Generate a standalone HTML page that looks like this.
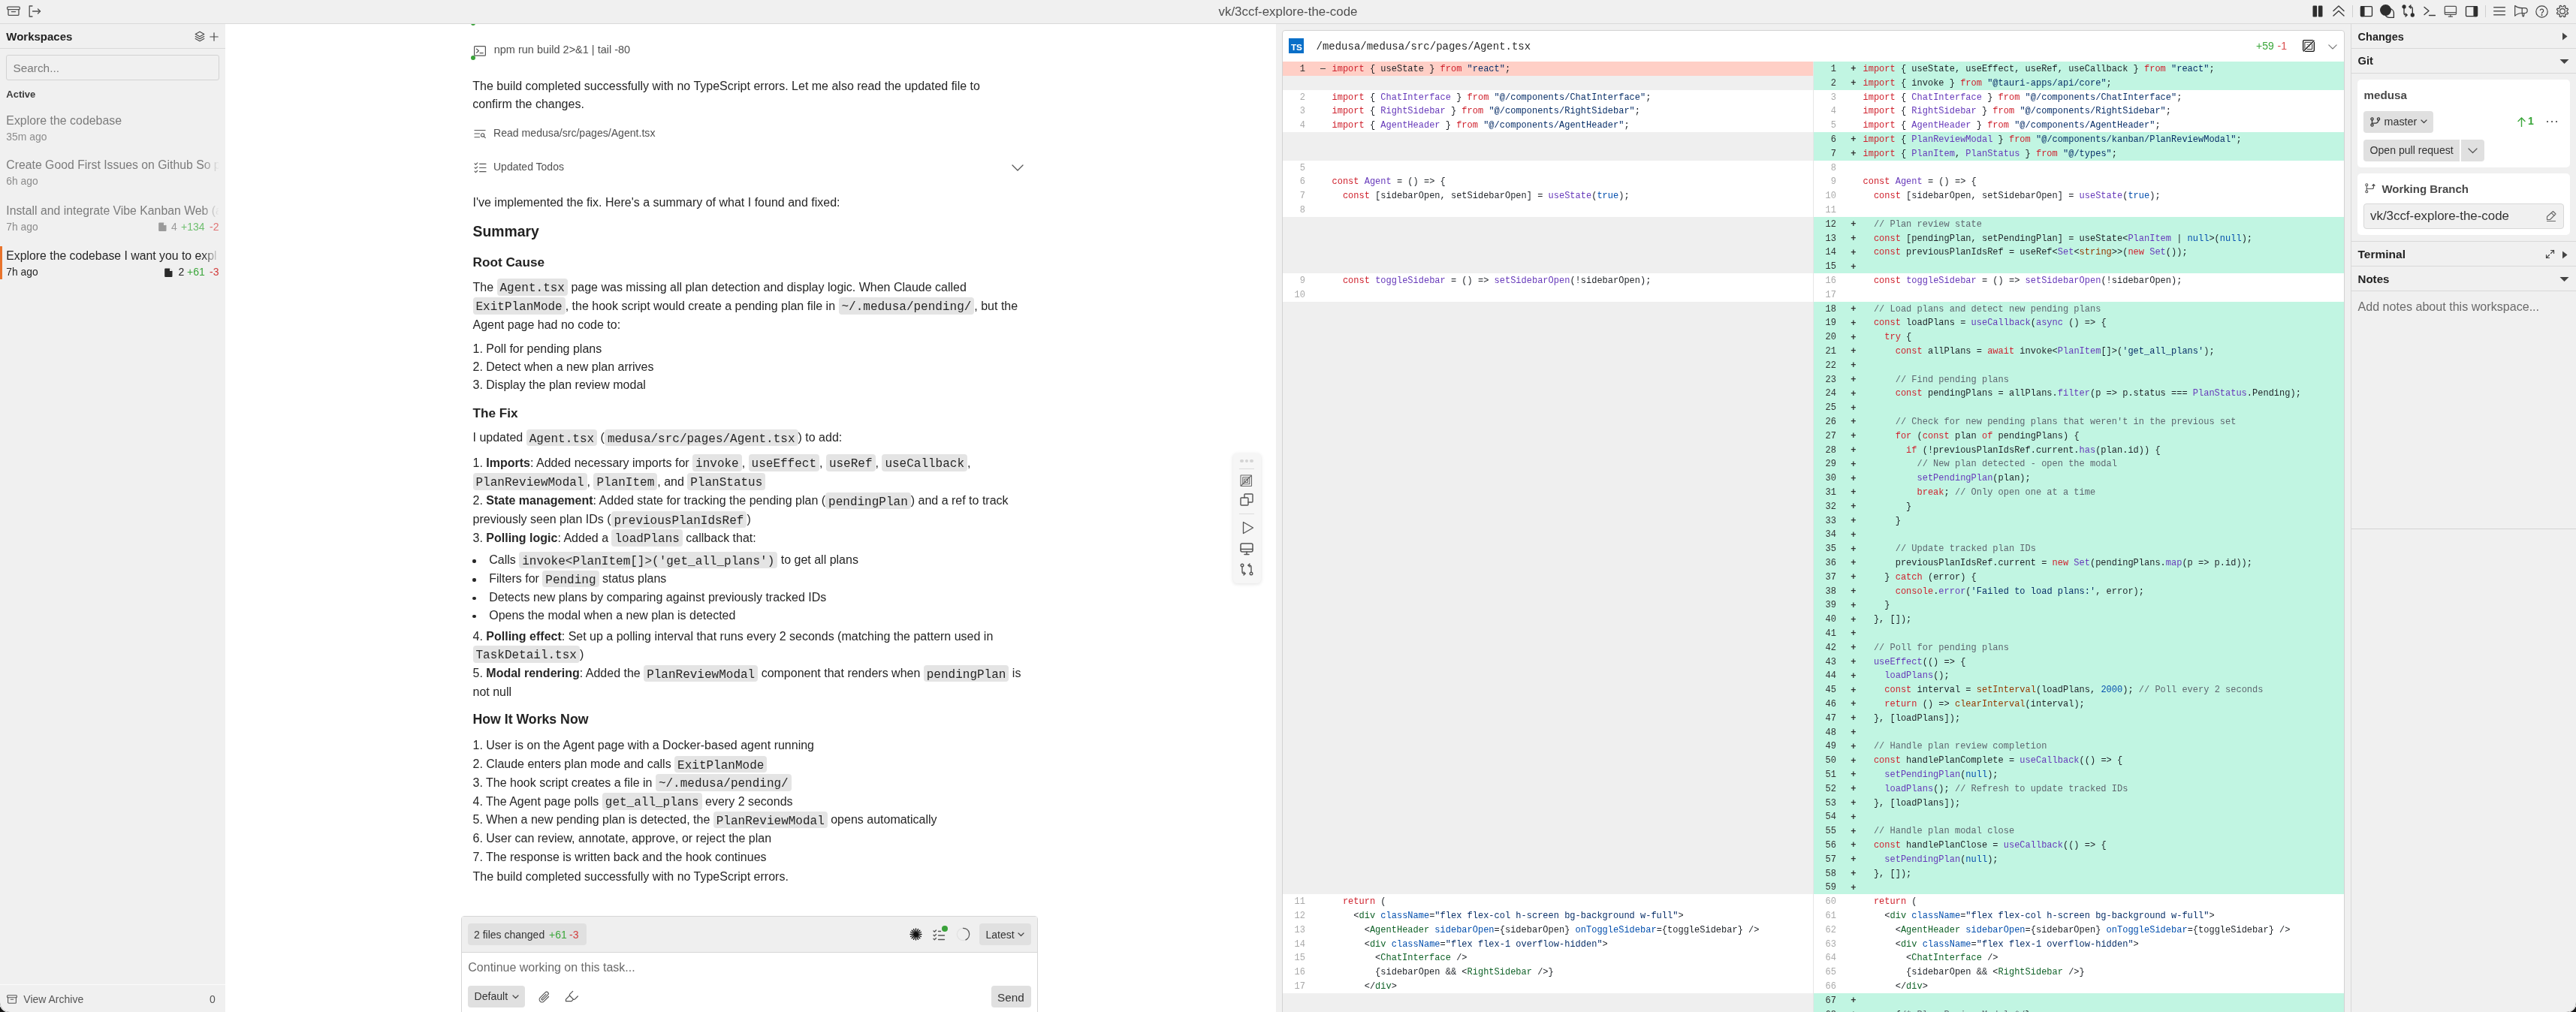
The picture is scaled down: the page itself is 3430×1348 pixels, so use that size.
<!DOCTYPE html><html><head><meta charset="utf-8"><style>
*{box-sizing:border-box;margin:0;padding:0}
html,body{width:3430px;height:1348px;overflow:hidden;background:#f0f0f0;font-family:'Liberation Sans',sans-serif;color:#222;position:relative}
.a{position:absolute}
.t{position:absolute;white-space:nowrap;line-height:1}
.code{font-family:'Liberation Mono',monospace;font-size:12px;white-space:pre}
.row{position:absolute;height:18.8px;line-height:18.8px}
.k{color:#cf222e}.f{color:#6639ba}.s{color:#0a3069}.c{color:#0550ae}.g{color:#116329}.o{color:#953800}.m{color:#5f6770}
.ic{font-family:'Liberation Mono',monospace;font-size:16px;background:#e4e4e4;border-radius:4px;padding:3.5px 4px 1px}
</style></head><body><div id="root" style="position:absolute;left:0;top:0;width:3430px;height:1348px;will-change:transform"><div class="a" style="left:0px;top:31px;width:3430px;height:1px;background:#d9d9d9"></div><svg class="a" style="left:9px;top:8px;" width="18" height="14" viewBox="0 0 18 14" fill="none" stroke="#505050" stroke-width="1.3" stroke-linecap="round" stroke-linejoin="round"><rect x="0.7" y="1.2" width="16.6" height="3.4" rx="1.2"/><path d="M2 4.6v6.6a1.2 1.2 0 0 0 1.2 1.2h11.6a1.2 1.2 0 0 0 1.2-1.2V4.6"/><path d="M6.4 7.6h5.2"/></svg><svg class="a" style="left:38px;top:7px;" width="17" height="16" viewBox="0 0 17 16" fill="none" stroke="#505050" stroke-width="1.3" stroke-linecap="round" stroke-linejoin="round"><path d="M5 1H1.2v14H5"/><path d="M5.5 8H15.5"/><path d="M12.5 5l3 3-3 3"/></svg><div class="t" style="left:1715px;transform:translateX(-50%);top:7.69px;font-size:16.9px;font-family:'Liberation Sans',sans-serif;color:#505050;font-weight:400;">vk/3ccf-explore-the-code</div><svg class="a" style="left:3079px;top:7px;" width="14" height="16" viewBox="0 0 14 16" fill="none" stroke="none" stroke-width="2" stroke-linecap="round" stroke-linejoin="round"><rect x="0.5" y="0.5" width="5.6" height="15" rx="1.2" fill="#2e2e2e" stroke="none"/><rect x="7.9" y="0.5" width="5.6" height="15" rx="1.2" fill="#2e2e2e" stroke="none"/></svg><svg class="a" style="left:3106px;top:7px;" width="16" height="15" viewBox="0 0 16 15" fill="none" stroke="#3a3a3a" stroke-width="1.4" stroke-linecap="round" stroke-linejoin="round"><path d="M1 7.5L8 1l7 6.5"/><path d="M1 14L8 7.5l7 6.5"/></svg><div class="a" style="left:3132px;top:7px;width:1px;height:16px;background:#d0d0d0"></div><svg class="a" style="left:3142px;top:7px;" width="18" height="16" viewBox="0 0 18 16" fill="none" stroke="#2e2e2e" stroke-width="1.3" stroke-linecap="round" stroke-linejoin="round"><rect x="1.5" y="1.6" width="15" height="13" rx="1.3"/><rect x="1.5" y="1.6" width="4.4" height="13" rx="0.8" fill="#2e2e2e"/></svg><svg class="a" style="left:3169px;top:6px;" width="20" height="18" viewBox="0 0 20 18" fill="none" stroke="#2e2e2e" stroke-width="1.3" stroke-linecap="round" stroke-linejoin="round"><circle cx="7.5" cy="7.5" r="6.8" fill="#2e2e2e"/><path d="M12.5 5.5a6 6 0 0 1 5.9 5.5v6.3h-6.4a6 6 0 0 1-4.5-2.5"/></svg><svg class="a" style="left:3198px;top:6px;" width="18" height="17" viewBox="0 0 18 17" fill="none" stroke="#2e2e2e" stroke-width="1.3" stroke-linecap="round" stroke-linejoin="round"><circle cx="3" cy="3" r="2" fill="#2e2e2e"/><circle cx="14.3" cy="14" r="2" fill="#2e2e2e"/><path d="M3 5v6.5a2.5 2.5 0 0 0 2.5 2.5H7"/><path d="M5 12l2 2-2 2"/><path d="M14.3 12V5.5a2.5 2.5 0 0 0-2.5-2.5H10"/><path d="M12 1l-2 2 2 2"/></svg><svg class="a" style="left:3227px;top:8px;" width="16" height="14" viewBox="0 0 16 14" fill="none" stroke="#3a3a3a" stroke-width="1.4" stroke-linecap="round" stroke-linejoin="round"><path d="M1 1.5l6 5-6 5"/><path d="M7.5 12.5H15.5"/></svg><svg class="a" style="left:3254px;top:7px;" width="18" height="16" viewBox="0 0 18 16" fill="none" stroke="#555" stroke-width="1.3" stroke-linecap="round" stroke-linejoin="round"><rect x="1.3" y="1.4" width="15.2" height="11" rx="1.3"/><path d="M1.5 9.6h14.8"/><path d="M8.9 12.4v2.4"/><path d="M6.3 15.1h5.2"/></svg><svg class="a" style="left:3282px;top:7px;" width="18" height="16" viewBox="0 0 18 16" fill="none" stroke="#2e2e2e" stroke-width="1.3" stroke-linecap="round" stroke-linejoin="round"><rect x="1.5" y="1.6" width="15" height="13" rx="1.3"/><rect x="12.1" y="1.6" width="4.4" height="13" rx="0.8" fill="#2e2e2e"/></svg><div class="a" style="left:3309px;top:7px;width:1px;height:16px;background:#d0d0d0"></div><svg class="a" style="left:3319px;top:6px;" width="18" height="18" viewBox="0 0 18 18" fill="none" stroke="#555" stroke-width="1.4" stroke-linecap="round" stroke-linejoin="round"><path d="M1.7 3.8h14.7"/><path d="M1.7 8.8h14.7"/><path d="M1.7 13.8h14.7"/></svg><svg class="a" style="left:3347px;top:6px;" width="20" height="18" viewBox="0 0 20 18" fill="none" stroke="#444" stroke-width="1.2" stroke-linecap="round" stroke-linejoin="round"><path d="M1.7 1.5C4 3.5 7 4.7 11.2 4.7V11.5C7 11.5 4 12.7 1.7 15.2Z"/><path d="M11.2 4.7H14.8a3.4 3.4 0 0 1 0 6.8H11.2"/><path d="M11.2 11.5L12 15.3a0.8 0.8 0 0 0 1.5 0L14 11.5"/></svg><svg class="a" style="left:3376px;top:7px;" width="17" height="17" viewBox="0 0 17 17" fill="none" stroke="#444" stroke-width="1.2" stroke-linecap="round" stroke-linejoin="round"><circle cx="8.5" cy="8.5" r="7.7"/><path d="M6.3 6.5a2.3 2.3 0 0 1 4.4 1c0 1.5-2.2 1.8-2.2 3.2"/><circle cx="8.5" cy="13" r="0.4" fill="#444"/></svg><svg class="a" style="left:3403px;top:6px;" width="18" height="18" viewBox="0 0 18 18" fill="none" stroke="#444" stroke-width="1.2" stroke-linecap="round" stroke-linejoin="round"><circle cx="9" cy="9" r="3.4"/><path d="M15.01 10.05 L16.61 11.13 L15.88 12.88 L13.99 12.51 L12.51 13.99 L12.88 15.88 L11.13 16.61 L10.05 15.01 L7.95 15.01 L6.87 16.61 L5.12 15.88 L5.49 13.99 L4.01 12.51 L2.12 12.88 L1.39 11.13 L2.99 10.05 L2.99 7.95 L1.39 6.87 L2.12 5.12 L4.01 5.49 L5.49 4.01 L5.12 2.12 L6.87 1.39 L7.95 2.99 L10.05 2.99 L11.13 1.39 L12.88 2.12 L12.51 4.01 L13.99 5.49 L15.88 5.12 L16.61 6.87 L15.01 7.95Z"/></svg><div class="a" style="left:0px;top:64px;width:300px;height:1px;background:#d9d9d9"></div><div class="t" style="left:8.3px;top:41.30px;font-size:15px;font-family:'Liberation Sans',sans-serif;color:#222;font-weight:700;">Workspaces</div><svg class="a" style="left:258.5px;top:41px;" width="14" height="15" viewBox="0 0 14 15" fill="none" stroke="#484848" stroke-width="1.15" stroke-linecap="round" stroke-linejoin="round"><path d="M7 1.2L1.2 4.5 7 7.8l5.8-3.3z"/><path d="M1.2 7.5L7 10.8l5.8-3.3"/><path d="M1.2 10.4L7 13.7l5.8-3.3"/></svg><svg class="a" style="left:278.5px;top:42.5px;" width="12" height="12" viewBox="0 0 12 12" fill="none" stroke="#484848" stroke-width="1.2" stroke-linecap="round" stroke-linejoin="round"><path d="M6 0.8v10.4"/><path d="M0.8 6h10.4"/></svg><div class="a" style="left:8px;top:73px;width:284px;height:34px;border:1px solid #d2d2d2;border-radius:3px;background:#f0f0f0"></div><div class="t" style="left:17.4px;top:82.96px;font-size:15.4px;font-family:'Liberation Sans',sans-serif;color:#7a7a7a;font-weight:400;">Search...</div><div class="t" style="left:8.3px;top:119.40px;font-size:13px;font-family:'Liberation Sans',sans-serif;color:#3c3c3c;font-weight:700;">Active</div><div class="t" style="left:8.3px;top:152.54px;font-size:15.9px;font-family:'Liberation Sans',sans-serif;color:#7b7b7b;font-weight:400;">Explore the codebase</div><div class="t" style="left:8.3px;top:176.23px;font-size:13.9px;font-family:'Liberation Sans',sans-serif;color:#8c8c8c;font-weight:400;">35m ago</div><div class="t" style="left:8.3px;top:212.33px;font-size:15.8px;font-family:'Liberation Sans',sans-serif;color:#7b7b7b;font-weight:400;-webkit-mask-image:linear-gradient(to right,#000 calc(100% - 22px),transparent);mask-image:linear-gradient(to right,#000 calc(100% - 22px),transparent);overflow:hidden;width:284px;padding-bottom:5px">Create Good First Issues on Github So pa</div><div class="t" style="left:8.3px;top:235.23px;font-size:13.9px;font-family:'Liberation Sans',sans-serif;color:#8c8c8c;font-weight:400;">6h ago</div><div class="t" style="left:8.3px;top:272.63px;font-size:15.8px;font-family:'Liberation Sans',sans-serif;color:#7b7b7b;font-weight:400;-webkit-mask-image:linear-gradient(to right,#000 calc(100% - 22px),transparent);mask-image:linear-gradient(to right,#000 calc(100% - 22px),transparent);overflow:hidden;width:284px;padding-bottom:5px">Install and integrate Vibe Kanban Web (a</div><div class="t" style="left:8.3px;top:296.23px;font-size:13.9px;font-family:'Liberation Sans',sans-serif;color:#8c8c8c;font-weight:400;">7h ago</div><svg class="a" style="left:211px;top:296px;" width="11" height="12" viewBox="0 0 11 12" fill="none" stroke="none" stroke-width="2" stroke-linecap="round" stroke-linejoin="round"><path d="M1.2 0.5h5.8l3.5 3.5v7a1 1 0 0 1-1 1H1.2a1 1 0 0 1-1-1V1.5a1 1 0 0 1 1-1z" fill="#9a9a9a"/><path d="M7 0.5v3.5h3.5" fill="#f0f0f0"/></svg><div class="t" style="left:228px;top:295.35px;font-size:14px;font-family:'Liberation Sans',sans-serif;color:#9a9a9a;font-weight:400;">4</div><div class="t" style="left:241px;top:295.35px;font-size:14px;font-family:'Liberation Sans',sans-serif;color:#6fbf6f;font-weight:400;">+134</div><div class="t" style="left:279px;top:295.35px;font-size:14px;font-family:'Liberation Sans',sans-serif;color:#e07474;font-weight:400;">-2</div><div class="a" style="left:0px;top:328px;width:2.5px;height:44px;background:#e8732c"></div><div class="t" style="left:8.3px;top:332.63px;font-size:15.8px;font-family:'Liberation Sans',sans-serif;color:#262626;font-weight:400;-webkit-mask-image:linear-gradient(to right,#000 calc(100% - 22px),transparent);mask-image:linear-gradient(to right,#000 calc(100% - 22px),transparent);overflow:hidden;width:284px;padding-bottom:5px">Explore the codebase I want you to expl</div><div class="t" style="left:8.3px;top:356.23px;font-size:13.9px;font-family:'Liberation Sans',sans-serif;color:#262626;font-weight:400;">7h ago</div><svg class="a" style="left:219px;top:357px;" width="11" height="12" viewBox="0 0 11 12" fill="none" stroke="none" stroke-width="2" stroke-linecap="round" stroke-linejoin="round"><path d="M1.2 0.5h5.8l3.5 3.5v7a1 1 0 0 1-1 1H1.2a1 1 0 0 1-1-1V1.5a1 1 0 0 1 1-1z" fill="#2a2a2a"/><path d="M7 0.5v3.5h3.5" fill="#f0f0f0"/></svg><div class="t" style="left:237.4px;top:354.95px;font-size:14px;font-family:'Liberation Sans',sans-serif;color:#222;font-weight:400;">2</div><div class="t" style="left:249px;top:354.95px;font-size:14px;font-family:'Liberation Sans',sans-serif;color:#3aa63a;font-weight:400;">+61</div><div class="t" style="left:279px;top:354.95px;font-size:14px;font-family:'Liberation Sans',sans-serif;color:#d23c3c;font-weight:400;">-3</div><div class="a" style="left:0px;top:1311px;width:300px;height:1px;background:#fbfbfb"></div><svg class="a" style="left:9px;top:1325px;" width="14" height="12" viewBox="0 0 14 12" fill="none" stroke="#555" stroke-width="1.1" stroke-linecap="round" stroke-linejoin="round"><rect x="0.6" y="0.8" width="12.8" height="3" rx="1"/><path d="M1.6 3.8v6.4a1 1 0 0 0 1 1h8.8a1 1 0 0 0 1-1V3.8"/><path d="M5.3 6.3h3.4"/></svg><div class="t" style="left:31.3px;top:1324.15px;font-size:14px;font-family:'Liberation Sans',sans-serif;color:#555;font-weight:400;">View Archive</div><div class="t" style="left:279px;top:1324.15px;font-size:14px;font-family:'Liberation Sans',sans-serif;color:#555;font-weight:400;">0</div><div class="a" style="left:300px;top:32px;width:1399px;height:1316px;background:#fff;overflow:hidden"><div class="a" style="left:327px;top:-4px;width:6px;height:6px;border-radius:50%;background:#3aa23a"></div><svg class="a" style="left:331px;top:29px;" width="16" height="14" viewBox="0 0 16 14" fill="none" stroke="#555" stroke-width="1.2" stroke-linecap="round" stroke-linejoin="round"><rect x="0.6" y="0.6" width="14.8" height="12.6" rx="1"/><path d="M3.5 4.2l3 2.5-3 2.5"/><path d="M8 9.6h4.2"/></svg><div class="a" style="left:327px;top:42.3px;width:6px;height:6px;border-radius:50%;background:#3aa23a"></div><div class="t" style="left:357.70000000000005px;top:27.23px;font-size:14.5px;font-family:'Liberation Sans',sans-serif;color:#505050;font-weight:400;">npm run build 2&gt;&amp;1 | tail -80</div><div class="t" style="left:329.29999999999995px;top:74.66px;font-size:16px;font-family:'Liberation Sans',sans-serif;color:#262626;font-weight:400;">The build completed successfully with no TypeScript errors. Let me also read the updated file to</div><div class="t" style="left:329.29999999999995px;top:99.46px;font-size:16px;font-family:'Liberation Sans',sans-serif;color:#262626;font-weight:400;">confirm the changes.</div><svg class="a" style="left:331px;top:140px;" width="17" height="13" viewBox="0 0 18 13" fill="none" stroke="#555" stroke-width="1.2" stroke-linecap="round" stroke-linejoin="round"><path d="M1 1.2h15"/><path d="M1 6h7"/><path d="M1 11h7"/><circle cx="12.3" cy="8" r="2.3"/><path d="M14 9.8l2.2 2.2"/></svg><div class="t" style="left:357px;top:137.56px;font-size:14.1px;font-family:'Liberation Sans',sans-serif;color:#505050;font-weight:400;">Read medusa/src/pages/Agent.tsx</div><svg class="a" style="left:331px;top:183.8px;" width="17" height="15" viewBox="0 0 18 16" fill="none" stroke="#555" stroke-width="1.2" stroke-linecap="round" stroke-linejoin="round"><path d="M1 2l1.5 1.5L5 1"/><path d="M1 7.5l1.5 1.5L5 6.5"/><path d="M1 13l1.5 1.5L5 12"/><path d="M8 2.5h9"/><path d="M8 8h9"/><path d="M8 13.5h9"/></svg><div class="t" style="left:357px;top:183.15px;font-size:14px;font-family:'Liberation Sans',sans-serif;color:#505050;font-weight:400;">Updated Todos</div><svg class="a" style="left:1047px;top:187px;" width="16" height="9" viewBox="0 0 16 9" fill="none" stroke="#555" stroke-width="1.3" stroke-linecap="round" stroke-linejoin="round"><path d="M1 1l7 7 7-7"/></svg><div class="t" style="left:329.5px;top:230.16px;font-size:16px;font-family:'Liberation Sans',sans-serif;color:#262626;font-weight:400;">I&#x27;ve implemented the fix. Here&#x27;s a summary of what I found and fixed:</div><div class="t" style="left:329.5px;top:267.08px;font-size:19.4px;font-family:'Liberation Sans',sans-serif;color:#222;font-weight:700;">Summary</div><div class="t" style="left:329.5px;top:308.94px;font-size:17.2px;font-family:'Liberation Sans',sans-serif;color:#222;font-weight:700;">Root Cause</div><div class="t" style="left:329.5px;top:342.86px;font-size:16px;font-family:'Liberation Sans',sans-serif;color:#262626;font-weight:400;">The <span class="ic">Agent.tsx</span> page was missing all plan detection and display logic. When Claude called</div><div class="t" style="left:329.5px;top:367.76px;font-size:16px;font-family:'Liberation Sans',sans-serif;color:#262626;font-weight:400;"><span class="ic">ExitPlanMode</span>, the hook script would create a pending plan file in <span class="ic">~/.medusa/pending/</span>, but the</div><div class="t" style="left:329.5px;top:392.66px;font-size:16px;font-family:'Liberation Sans',sans-serif;color:#262626;font-weight:400;">Agent page had no code to:</div><div class="t" style="left:329.5px;top:424.86px;font-size:16px;font-family:'Liberation Sans',sans-serif;color:#262626;font-weight:400;">1. Poll for pending plans</div><div class="t" style="left:329.5px;top:448.76px;font-size:16px;font-family:'Liberation Sans',sans-serif;color:#262626;font-weight:400;">2. Detect when a new plan arrives</div><div class="t" style="left:329.5px;top:472.56px;font-size:16px;font-family:'Liberation Sans',sans-serif;color:#262626;font-weight:400;">3. Display the plan review modal</div><div class="t" style="left:329.5px;top:509.84px;font-size:17.2px;font-family:'Liberation Sans',sans-serif;color:#222;font-weight:700;">The Fix</div><div class="t" style="left:329.5px;top:543.46px;font-size:16px;font-family:'Liberation Sans',sans-serif;color:#262626;font-weight:400;">I updated <span class="ic">Agent.tsx</span> (<span class="ic">medusa/src/pages/Agent.tsx</span>) to add:</div><div class="t" style="left:329.5px;top:576.96px;font-size:16px;font-family:'Liberation Sans',sans-serif;color:#262626;font-weight:400;">1. <b>Imports</b>: Added necessary imports for <span class="ic">invoke</span>, <span class="ic">useEffect</span>, <span class="ic">useRef</span>, <span class="ic">useCallback</span>,</div><div class="t" style="left:329.5px;top:601.96px;font-size:16px;font-family:'Liberation Sans',sans-serif;color:#262626;font-weight:400;"><span class="ic">PlanReviewModal</span>, <span class="ic">PlanItem</span>, and <span class="ic">PlanStatus</span></div><div class="t" style="left:329.5px;top:627.36px;font-size:16px;font-family:'Liberation Sans',sans-serif;color:#262626;font-weight:400;">2. <b>State management</b>: Added state for tracking the pending plan (<span class="ic">pendingPlan</span>) and a ref to track</div><div class="t" style="left:329.5px;top:652.26px;font-size:16px;font-family:'Liberation Sans',sans-serif;color:#262626;font-weight:400;">previously seen plan IDs (<span class="ic">previousPlanIdsRef</span>)</div><div class="t" style="left:329.5px;top:676.96px;font-size:16px;font-family:'Liberation Sans',sans-serif;color:#262626;font-weight:400;">3. <b>Polling logic</b>: Added a <span class="ic">loadPlans</span> callback that:</div><div class="a" style="left:329px;top:713px;width:4.5px;height:4.5px;border-radius:50%;background:#262626"></div><div class="t" style="left:351.20000000000005px;top:706.46px;font-size:16px;font-family:'Liberation Sans',sans-serif;color:#262626;font-weight:400;">Calls <span class="ic">invoke&lt;PlanItem[]&gt;(&#x27;get_all_plans&#x27;)</span> to get all plans</div><div class="a" style="left:329px;top:738px;width:4.5px;height:4.5px;border-radius:50%;background:#262626"></div><div class="t" style="left:351.20000000000005px;top:731.46px;font-size:16px;font-family:'Liberation Sans',sans-serif;color:#262626;font-weight:400;">Filters for <span class="ic">Pending</span> status plans</div><div class="a" style="left:329px;top:762.8px;width:4.5px;height:4.5px;border-radius:50%;background:#262626"></div><div class="t" style="left:351.20000000000005px;top:756.26px;font-size:16px;font-family:'Liberation Sans',sans-serif;color:#262626;font-weight:400;">Detects new plans by comparing against previously tracked IDs</div><div class="a" style="left:329px;top:786.5px;width:4.5px;height:4.5px;border-radius:50%;background:#262626"></div><div class="t" style="left:351.20000000000005px;top:779.96px;font-size:16px;font-family:'Liberation Sans',sans-serif;color:#262626;font-weight:400;">Opens the modal when a new plan is detected</div><div class="t" style="left:329.5px;top:808.26px;font-size:16px;font-family:'Liberation Sans',sans-serif;color:#262626;font-weight:400;">4. <b>Polling effect</b>: Set up a polling interval that runs every 2 seconds (matching the pattern used in</div><div class="t" style="left:329.5px;top:831.96px;font-size:16px;font-family:'Liberation Sans',sans-serif;color:#262626;font-weight:400;"><span class="ic">TaskDetail.tsx</span>)</div><div class="t" style="left:329.5px;top:857.36px;font-size:16px;font-family:'Liberation Sans',sans-serif;color:#262626;font-weight:400;">5. <b>Modal rendering</b>: Added the <span class="ic">PlanReviewModal</span> component that renders when <span class="ic">pendingPlan</span> is</div><div class="t" style="left:329.5px;top:882.26px;font-size:16px;font-family:'Liberation Sans',sans-serif;color:#262626;font-weight:400;">not null</div><div class="t" style="left:329.5px;top:918.02px;font-size:17.7px;font-family:'Liberation Sans',sans-serif;color:#222;font-weight:700;">How It Works Now</div><div class="t" style="left:329.5px;top:953.26px;font-size:16px;font-family:'Liberation Sans',sans-serif;color:#262626;font-weight:400;">1. User is on the Agent page with a Docker-based agent running</div><div class="t" style="left:329.5px;top:978.01px;font-size:16px;font-family:'Liberation Sans',sans-serif;color:#262626;font-weight:400;">2. Claude enters plan mode and calls <span class="ic">ExitPlanMode</span></div><div class="t" style="left:329.5px;top:1002.76px;font-size:16px;font-family:'Liberation Sans',sans-serif;color:#262626;font-weight:400;">3. The hook script creates a file in <span class="ic">~/.medusa/pending/</span></div><div class="t" style="left:329.5px;top:1027.51px;font-size:16px;font-family:'Liberation Sans',sans-serif;color:#262626;font-weight:400;">4. The Agent page polls <span class="ic">get_all_plans</span> every 2 seconds</div><div class="t" style="left:329.5px;top:1052.26px;font-size:16px;font-family:'Liberation Sans',sans-serif;color:#262626;font-weight:400;">5. When a new pending plan is detected, the <span class="ic">PlanReviewModal</span> opens automatically</div><div class="t" style="left:329.5px;top:1077.01px;font-size:16px;font-family:'Liberation Sans',sans-serif;color:#262626;font-weight:400;">6. User can review, annotate, approve, or reject the plan</div><div class="t" style="left:329.5px;top:1101.76px;font-size:16px;font-family:'Liberation Sans',sans-serif;color:#262626;font-weight:400;">7. The response is written back and the hook continues</div><div class="t" style="left:329.5px;top:1128.46px;font-size:16px;font-family:'Liberation Sans',sans-serif;color:#262626;font-weight:400;">The build completed successfully with no TypeScript errors.</div><div class="a" style="left:1341.5px;top:571.5px;width:37px;height:173.5px;background:#f6f6f6;border-radius:5px;box-shadow:0 1px 5px rgba(0,0,0,0.12)"></div><div class="a" style="left:1351.3999999999999px;top:579.5px;width:4.4px;height:4.4px;border-radius:50%;background:#d4d4d4"></div><div class="a" style="left:1357.8px;top:579.5px;width:4.4px;height:4.4px;border-radius:50%;background:#d4d4d4"></div><div class="a" style="left:1364.2px;top:579.5px;width:4.4px;height:4.4px;border-radius:50%;background:#d4d4d4"></div><div class="a" style="left:1350px;top:592px;width:20px;height:1px;background:#dcdcdc"></div><svg class="a" style="left:1351px;top:600px;" width="17" height="17" viewBox="0 0 17 17" fill="none" stroke="#666" stroke-width="1.1" stroke-linecap="round" stroke-linejoin="round"><rect x="1" y="1" width="14.5" height="14.5" rx="0.5"/><rect x="3.8" y="3.8" width="9" height="9"/><rect x="6" y="6" width="4.5" height="4.5"/><path d="M1.5 15L15 1.5"/></svg><svg class="a" style="left:1351px;top:625px;" width="18" height="18" viewBox="0 0 18 18" fill="none" stroke="#555" stroke-width="1.4" stroke-linecap="round" stroke-linejoin="round"><rect x="1" y="6" width="10" height="10" rx="1"/><path d="M6 6V2a1 1 0 0 1 1-1h9a1 1 0 0 1 1 1v9a1 1 0 0 1-1 1h-5"/></svg><div class="a" style="left:1350px;top:652px;width:20px;height:1px;background:#dcdcdc"></div><svg class="a" style="left:1354px;top:662px;" width="16" height="18" viewBox="0 0 16 18" fill="none" stroke="#555" stroke-width="1.3" stroke-linecap="round" stroke-linejoin="round"><path d="M1.5 1.5v15l13-7.5z"/></svg><svg class="a" style="left:1351px;top:691px;" width="18" height="17" viewBox="0 0 18 17" fill="none" stroke="#555" stroke-width="1.5" stroke-linecap="round" stroke-linejoin="round"><rect x="1" y="1" width="16" height="11" rx="2"/><path d="M1 8.5h16"/><path d="M9 12v3"/><path d="M6 15.5h6"/></svg><svg class="a" style="left:1351px;top:718px;" width="18" height="17" viewBox="0 0 18 17" fill="none" stroke="#555" stroke-width="1.4" stroke-linecap="round" stroke-linejoin="round"><circle cx="3" cy="3" r="1.8"/><circle cx="15" cy="14" r="1.8"/><path d="M3 5v6.5a2.5 2.5 0 0 0 2.5 2.5H7"/><path d="M5 12l2 2-2 2"/><path d="M15 12V5.5a2.5 2.5 0 0 0-2.5-2.5H11"/><path d="M13 1l-2 2 2 2"/></svg><div class="a" style="left:314px;top:1188px;width:768px;height:140px;border:1px solid #d6d6d6;border-radius:4px;background:#fff;overflow:hidden"></div><div class="a" style="left:315px;top:1189px;width:766px;height:48px;background:#efefef;border-bottom:1px solid #d6d6d6"></div><div class="a" style="left:323px;top:1198px;width:158px;height:29px;background:#e0e0e0;border-radius:4px"></div><div class="t" style="left:331px;top:1205.55px;font-size:14px;font-family:'Liberation Sans',sans-serif;color:#333;font-weight:400;">2 files changed</div><div class="t" style="left:431px;top:1205.55px;font-size:14px;font-family:'Liberation Sans',sans-serif;color:#3aa63a;font-weight:400;">+61</div><div class="t" style="left:458px;top:1205.55px;font-size:14px;font-family:'Liberation Sans',sans-serif;color:#d23c3c;font-weight:400;">-3</div><svg class="a" style="left:911px;top:1204px;" width="17" height="17" viewBox="0 0 17 17" fill="none" stroke="#111" stroke-width="1.3" stroke-linecap="round" stroke-linejoin="round"><path d="M8.5 1v15"/><path d="M1 8.5h15"/><path d="M3.2 3.2l10.6 10.6"/><path d="M13.8 3.2L3.2 13.8"/><path d="M5.5 1.6l6 13.8"/><path d="M11.5 1.6l-6 13.8"/><path d="M1.6 5.5l13.8 6"/><path d="M1.6 11.5l13.8-6"/></svg><div class="a" style="left:916.5px;top:1209.5px;width:6px;height:6px;border-radius:50%;background:#111"></div><svg class="a" style="left:942px;top:1205px;" width="17" height="16" viewBox="0 0 17 16" fill="none" stroke="#555" stroke-width="1.3" stroke-linecap="round" stroke-linejoin="round"><path d="M1 3l1.3 1.3L4.5 2"/><path d="M1 8.5l1.3 1.3L4.5 7.5"/><path d="M1 13.5l1.3 1.3L4.5 12.5"/><path d="M7.5 3.5h3"/><path d="M7.5 9h8"/><path d="M7.5 14.5h8"/></svg><div class="a" style="left:954px;top:1201px;width:8px;height:8px;border-radius:50%;background:#3aa23a"></div><svg class="a" style="left:973px;top:1203px;" width="19" height="19" viewBox="0 0 19 19" fill="none" stroke="#555" stroke-width="1.3" stroke-linecap="round" stroke-linejoin="round"><circle cx="9.5" cy="9.5" r="8.2" stroke="#e2e2e2"/><path d="M9.5 1.3a8.2 8.2 0 0 1 3.5 15.6" stroke="#555"/></svg><div class="a" style="left:1004px;top:1198px;width:69px;height:29px;background:#e0e0e0;border-radius:4px"></div><div class="t" style="left:1012.5px;top:1205.55px;font-size:14px;font-family:'Liberation Sans',sans-serif;color:#333;font-weight:400;">Latest</div><svg class="a" style="left:1055px;top:1210px;" width="9" height="6" viewBox="0 0 9 6" fill="none" stroke="#444" stroke-width="1.2" stroke-linecap="round" stroke-linejoin="round"><path d="M1 1l3.5 3.5L8 1"/></svg><div class="t" style="left:323.29999999999995px;top:1249.16px;font-size:16px;font-family:'Liberation Sans',sans-serif;color:#6a6a6a;font-weight:400;">Continue working on this task...</div><div class="a" style="left:323px;top:1281px;width:76px;height:29px;background:#e0e0e0;border-radius:4px"></div><div class="t" style="left:331.5px;top:1288.06px;font-size:14.1px;font-family:'Liberation Sans',sans-serif;color:#333;font-weight:400;">Default</div><svg class="a" style="left:382px;top:1293px;" width="9" height="6" viewBox="0 0 9 6" fill="none" stroke="#444" stroke-width="1.2" stroke-linecap="round" stroke-linejoin="round"><path d="M1 1l3.5 3.5L8 1"/></svg><svg class="a" style="left:416px;top:1287px;" width="17" height="18" viewBox="0 0 17 18" fill="none" stroke="#555" stroke-width="1.2" stroke-linecap="round" stroke-linejoin="round"><path d="M14.5 8.5l-6.3 6.3a3.5 3.5 0 0 1-5-5l7-7a2.3 2.3 0 0 1 3.3 3.3l-6.8 6.8a1.2 1.2 0 0 1-1.6-1.6l6-6"/></svg><svg class="a" style="left:451px;top:1285px;" width="20" height="20" viewBox="0 0 24 24" fill="none" stroke="#555" stroke-width="1.5" stroke-linecap="round" stroke-linejoin="round"><path d="m9 11-6 6v3h9l3-3"/><path d="m22 12-4.6 4.6a2 2 0 0 1-2.8 0l-5.2-5.2a2 2 0 0 1 0-2.8L14 4"/></svg><div class="a" style="left:1020px;top:1281px;width:53px;height:29px;background:#e0e0e0;border-radius:4px"></div><div class="t" style="left:1028px;top:1288.85px;font-size:15.3px;font-family:'Liberation Sans',sans-serif;color:#333;font-weight:400;">Send</div></div><div class="a" style="left:1707px;top:40px;width:1415px;height:1400px;background:#fff;border:1px solid #d2d2d2;border-radius:4px"></div><div class="a" style="left:1716px;top:51px;width:20px;height:20px;background:#0a6fc8"></div><div class="t" style="left:1726.3px;transform:translateX(-50%);top:57.81px;font-size:11.8px;font-family:'Liberation Sans',sans-serif;color:#fff;font-weight:700;letter-spacing:-0.2px">TS</div><div class="t" style="left:1752.5px;top:55.47px;font-size:14px;font-family:'Liberation Mono',monospace;color:#2a2a2a;font-weight:400;">/medusa/medusa/src/pages/Agent.tsx</div><div class="t" style="left:3004px;top:54.35px;font-size:14px;font-family:'Liberation Sans',sans-serif;color:#3aa63a;font-weight:400;">+59</div><div class="t" style="left:3032.5px;top:54.35px;font-size:14px;font-family:'Liberation Sans',sans-serif;color:#d94b4b;font-weight:400;">-1</div><svg class="a" style="left:3066px;top:53px;" width="16" height="16" viewBox="0 0 16 16" fill="none" stroke="#111" stroke-width="1.3" stroke-linecap="round" stroke-linejoin="round"><rect x="0.65" y="0.65" width="14.7" height="14.7" rx="1.3" stroke-width="1.3"/><rect x="3.3" y="3.3" width="9.4" height="9.2" stroke-width="0.9"/><path d="M5.8 6.4h4.2M5.8 9.4h4.2" stroke="#666" stroke-width="0.8"/><path d="M1.2 15.3L15.3 1" stroke="#fff" stroke-width="2.6"/><path d="M1.2 15L15 1.2" stroke-width="1.3"/></svg><svg class="a" style="left:3099.5px;top:58.5px;" width="12" height="7" viewBox="0 0 12 7" fill="none" stroke="#777" stroke-width="1.1" stroke-linecap="round" stroke-linejoin="round"><path d="M0.8 0.8l5.2 5.2 5.2-5.2"/></svg><div class="a" style="left:1708px;top:0;width:1413px;height:1348px;overflow:hidden"><div class="a" style="left:0px;top:82.00px;width:706px;height:18.80px;background:#ffcfc6"></div><div class="a" style="left:0px;top:100.80px;width:706px;height:18.80px;background:#efefef"></div><div class="a" style="left:0px;top:176.00px;width:706px;height:37.60px;background:#efefef"></div><div class="a" style="left:0px;top:288.80px;width:706px;height:75.20px;background:#efefef"></div><div class="a" style="left:0px;top:401.60px;width:706px;height:789.60px;background:#efefef"></div><div class="a" style="left:0px;top:1322.80px;width:706px;height:37.60px;background:#efefef"></div><div class="a code" style="left:0px;top:82.00px;width:30px;text-align:right;height:18.8px;line-height:18.8px;padding-top:1px;color:#333">1</div><div class="a" style="left:50px;top:90.60px;width:7px;height:1.6px;background:#444"></div><div class="a code" style="left:65.5px;top:82.00px;height:18.8px;line-height:18.8px;padding-top:1px;color:#1f2328"><span class="k">import</span> { useState } <span class="k">from</span> <span class="s">&quot;react&quot;</span>;</div><div class="a code" style="left:0px;top:119.60px;width:30px;text-align:right;height:18.8px;line-height:18.8px;padding-top:1px;color:#aaa">2</div><div class="a code" style="left:65.5px;top:119.60px;height:18.8px;line-height:18.8px;padding-top:1px;color:#1f2328"><span class="k">import</span> { <span class="f">ChatInterface</span> } <span class="k">from</span> <span class="s">&quot;@/components/ChatInterface&quot;</span>;</div><div class="a code" style="left:0px;top:138.40px;width:30px;text-align:right;height:18.8px;line-height:18.8px;padding-top:1px;color:#aaa">3</div><div class="a code" style="left:65.5px;top:138.40px;height:18.8px;line-height:18.8px;padding-top:1px;color:#1f2328"><span class="k">import</span> { <span class="f">RightSidebar</span> } <span class="k">from</span> <span class="s">&quot;@/components/RightSidebar&quot;</span>;</div><div class="a code" style="left:0px;top:157.20px;width:30px;text-align:right;height:18.8px;line-height:18.8px;padding-top:1px;color:#aaa">4</div><div class="a code" style="left:65.5px;top:157.20px;height:18.8px;line-height:18.8px;padding-top:1px;color:#1f2328"><span class="k">import</span> { <span class="f">AgentHeader</span> } <span class="k">from</span> <span class="s">&quot;@/components/AgentHeader&quot;</span>;</div><div class="a code" style="left:0px;top:213.60px;width:30px;text-align:right;height:18.8px;line-height:18.8px;padding-top:1px;color:#aaa">5</div><div class="a code" style="left:0px;top:232.40px;width:30px;text-align:right;height:18.8px;line-height:18.8px;padding-top:1px;color:#aaa">6</div><div class="a code" style="left:65.5px;top:232.40px;height:18.8px;line-height:18.8px;padding-top:1px;color:#1f2328"><span class="k">const</span> <span class="f">Agent</span> = () =&gt; {</div><div class="a code" style="left:0px;top:251.20px;width:30px;text-align:right;height:18.8px;line-height:18.8px;padding-top:1px;color:#aaa">7</div><div class="a code" style="left:65.5px;top:251.20px;height:18.8px;line-height:18.8px;padding-top:1px;color:#1f2328">  <span class="k">const</span> [sidebarOpen, setSidebarOpen] = <span class="f">useState</span>(<span class="c">true</span>);</div><div class="a code" style="left:0px;top:270.00px;width:30px;text-align:right;height:18.8px;line-height:18.8px;padding-top:1px;color:#aaa">8</div><div class="a code" style="left:0px;top:364.00px;width:30px;text-align:right;height:18.8px;line-height:18.8px;padding-top:1px;color:#aaa">9</div><div class="a code" style="left:65.5px;top:364.00px;height:18.8px;line-height:18.8px;padding-top:1px;color:#1f2328">  <span class="k">const</span> <span class="f">toggleSidebar</span> = () =&gt; <span class="f">setSidebarOpen</span>(!sidebarOpen);</div><div class="a code" style="left:0px;top:382.80px;width:30px;text-align:right;height:18.8px;line-height:18.8px;padding-top:1px;color:#aaa">10</div><div class="a code" style="left:0px;top:1191.20px;width:30px;text-align:right;height:18.8px;line-height:18.8px;padding-top:1px;color:#aaa">11</div><div class="a code" style="left:65.5px;top:1191.20px;height:18.8px;line-height:18.8px;padding-top:1px;color:#1f2328">  <span class="k">return</span> (</div><div class="a code" style="left:0px;top:1210.00px;width:30px;text-align:right;height:18.8px;line-height:18.8px;padding-top:1px;color:#aaa">12</div><div class="a code" style="left:65.5px;top:1210.00px;height:18.8px;line-height:18.8px;padding-top:1px;color:#1f2328">    &lt;<span class="g">div</span> <span class="c">className</span>=<span class="s">&quot;flex flex-col h-screen bg-background w-full&quot;</span>&gt;</div><div class="a code" style="left:0px;top:1228.80px;width:30px;text-align:right;height:18.8px;line-height:18.8px;padding-top:1px;color:#aaa">13</div><div class="a code" style="left:65.5px;top:1228.80px;height:18.8px;line-height:18.8px;padding-top:1px;color:#1f2328">      &lt;<span class="g">AgentHeader</span> <span class="c">sidebarOpen</span>={sidebarOpen} <span class="c">onToggleSidebar</span>={toggleSidebar} /&gt;</div><div class="a code" style="left:0px;top:1247.60px;width:30px;text-align:right;height:18.8px;line-height:18.8px;padding-top:1px;color:#aaa">14</div><div class="a code" style="left:65.5px;top:1247.60px;height:18.8px;line-height:18.8px;padding-top:1px;color:#1f2328">      &lt;<span class="g">div</span> <span class="c">className</span>=<span class="s">&quot;flex flex-1 overflow-hidden&quot;</span>&gt;</div><div class="a code" style="left:0px;top:1266.40px;width:30px;text-align:right;height:18.8px;line-height:18.8px;padding-top:1px;color:#aaa">15</div><div class="a code" style="left:65.5px;top:1266.40px;height:18.8px;line-height:18.8px;padding-top:1px;color:#1f2328">        &lt;<span class="g">ChatInterface</span> /&gt;</div><div class="a code" style="left:0px;top:1285.20px;width:30px;text-align:right;height:18.8px;line-height:18.8px;padding-top:1px;color:#aaa">16</div><div class="a code" style="left:65.5px;top:1285.20px;height:18.8px;line-height:18.8px;padding-top:1px;color:#1f2328">        {sidebarOpen &amp;&amp; &lt;<span class="g">RightSidebar</span> /&gt;}</div><div class="a code" style="left:0px;top:1304.00px;width:30px;text-align:right;height:18.8px;line-height:18.8px;padding-top:1px;color:#aaa">17</div><div class="a code" style="left:65.5px;top:1304.00px;height:18.8px;line-height:18.8px;padding-top:1px;color:#1f2328">      &lt;/<span class="g">div</span>&gt;</div><div class="a" style="left:706px;top:82px;width:1px;height:1300px;background:#e6e6e6"></div><div class="a" style="left:707px;top:82.00px;width:706px;height:37.60px;background:#c1f5e2"></div><div class="a" style="left:707px;top:176.00px;width:706px;height:37.60px;background:#c1f5e2"></div><div class="a" style="left:707px;top:288.80px;width:706px;height:75.20px;background:#c1f5e2"></div><div class="a" style="left:707px;top:401.60px;width:706px;height:789.60px;background:#c1f5e2"></div><div class="a" style="left:707px;top:1322.80px;width:706px;height:37.60px;background:#c1f5e2"></div><div class="a code" style="left:707px;top:82.00px;width:30px;text-align:right;height:18.8px;line-height:18.8px;padding-top:1px;color:#333">1</div><div class="a code" style="left:756.3px;top:82.00px;height:18.8px;line-height:18.8px;padding-top:1.4px;color:#333;font-weight:700">+</div><div class="a code" style="left:772.5px;top:82.00px;height:18.8px;line-height:18.8px;padding-top:1px;color:#1f2328"><span class="k">import</span> { useState, useEffect, useRef, useCallback } <span class="k">from</span> <span class="s">&quot;react&quot;</span>;</div><div class="a code" style="left:707px;top:100.80px;width:30px;text-align:right;height:18.8px;line-height:18.8px;padding-top:1px;color:#333">2</div><div class="a code" style="left:756.3px;top:100.80px;height:18.8px;line-height:18.8px;padding-top:1.4px;color:#333;font-weight:700">+</div><div class="a code" style="left:772.5px;top:100.80px;height:18.8px;line-height:18.8px;padding-top:1px;color:#1f2328"><span class="k">import</span> { invoke } <span class="k">from</span> <span class="s">&quot;@tauri-apps/api/core&quot;</span>;</div><div class="a code" style="left:707px;top:119.60px;width:30px;text-align:right;height:18.8px;line-height:18.8px;padding-top:1px;color:#aaa">3</div><div class="a code" style="left:772.5px;top:119.60px;height:18.8px;line-height:18.8px;padding-top:1px;color:#1f2328"><span class="k">import</span> { <span class="f">ChatInterface</span> } <span class="k">from</span> <span class="s">&quot;@/components/ChatInterface&quot;</span>;</div><div class="a code" style="left:707px;top:138.40px;width:30px;text-align:right;height:18.8px;line-height:18.8px;padding-top:1px;color:#aaa">4</div><div class="a code" style="left:772.5px;top:138.40px;height:18.8px;line-height:18.8px;padding-top:1px;color:#1f2328"><span class="k">import</span> { <span class="f">RightSidebar</span> } <span class="k">from</span> <span class="s">&quot;@/components/RightSidebar&quot;</span>;</div><div class="a code" style="left:707px;top:157.20px;width:30px;text-align:right;height:18.8px;line-height:18.8px;padding-top:1px;color:#aaa">5</div><div class="a code" style="left:772.5px;top:157.20px;height:18.8px;line-height:18.8px;padding-top:1px;color:#1f2328"><span class="k">import</span> { <span class="f">AgentHeader</span> } <span class="k">from</span> <span class="s">&quot;@/components/AgentHeader&quot;</span>;</div><div class="a code" style="left:707px;top:176.00px;width:30px;text-align:right;height:18.8px;line-height:18.8px;padding-top:1px;color:#333">6</div><div class="a code" style="left:756.3px;top:176.00px;height:18.8px;line-height:18.8px;padding-top:1.4px;color:#333;font-weight:700">+</div><div class="a code" style="left:772.5px;top:176.00px;height:18.8px;line-height:18.8px;padding-top:1px;color:#1f2328"><span class="k">import</span> { <span class="f">PlanReviewModal</span> } <span class="k">from</span> <span class="s">&quot;@/components/kanban/PlanReviewModal&quot;</span>;</div><div class="a code" style="left:707px;top:194.80px;width:30px;text-align:right;height:18.8px;line-height:18.8px;padding-top:1px;color:#333">7</div><div class="a code" style="left:756.3px;top:194.80px;height:18.8px;line-height:18.8px;padding-top:1.4px;color:#333;font-weight:700">+</div><div class="a code" style="left:772.5px;top:194.80px;height:18.8px;line-height:18.8px;padding-top:1px;color:#1f2328"><span class="k">import</span> { <span class="f">PlanItem</span>, <span class="f">PlanStatus</span> } <span class="k">from</span> <span class="s">&quot;@/types&quot;</span>;</div><div class="a code" style="left:707px;top:213.60px;width:30px;text-align:right;height:18.8px;line-height:18.8px;padding-top:1px;color:#aaa">8</div><div class="a code" style="left:707px;top:232.40px;width:30px;text-align:right;height:18.8px;line-height:18.8px;padding-top:1px;color:#aaa">9</div><div class="a code" style="left:772.5px;top:232.40px;height:18.8px;line-height:18.8px;padding-top:1px;color:#1f2328"><span class="k">const</span> <span class="f">Agent</span> = () =&gt; {</div><div class="a code" style="left:707px;top:251.20px;width:30px;text-align:right;height:18.8px;line-height:18.8px;padding-top:1px;color:#aaa">10</div><div class="a code" style="left:772.5px;top:251.20px;height:18.8px;line-height:18.8px;padding-top:1px;color:#1f2328">  <span class="k">const</span> [sidebarOpen, setSidebarOpen] = <span class="f">useState</span>(<span class="c">true</span>);</div><div class="a code" style="left:707px;top:270.00px;width:30px;text-align:right;height:18.8px;line-height:18.8px;padding-top:1px;color:#aaa">11</div><div class="a code" style="left:707px;top:288.80px;width:30px;text-align:right;height:18.8px;line-height:18.8px;padding-top:1px;color:#333">12</div><div class="a code" style="left:756.3px;top:288.80px;height:18.8px;line-height:18.8px;padding-top:1.4px;color:#333;font-weight:700">+</div><div class="a code" style="left:772.5px;top:288.80px;height:18.8px;line-height:18.8px;padding-top:1px;color:#1f2328">  <span class="m">// Plan review state</span></div><div class="a code" style="left:707px;top:307.60px;width:30px;text-align:right;height:18.8px;line-height:18.8px;padding-top:1px;color:#333">13</div><div class="a code" style="left:756.3px;top:307.60px;height:18.8px;line-height:18.8px;padding-top:1.4px;color:#333;font-weight:700">+</div><div class="a code" style="left:772.5px;top:307.60px;height:18.8px;line-height:18.8px;padding-top:1px;color:#1f2328">  <span class="k">const</span> [pendingPlan, setPendingPlan] = useState&lt;<span class="f">PlanItem</span> | <span class="c">null</span>&gt;(<span class="c">null</span>);</div><div class="a code" style="left:707px;top:326.40px;width:30px;text-align:right;height:18.8px;line-height:18.8px;padding-top:1px;color:#333">14</div><div class="a code" style="left:756.3px;top:326.40px;height:18.8px;line-height:18.8px;padding-top:1.4px;color:#333;font-weight:700">+</div><div class="a code" style="left:772.5px;top:326.40px;height:18.8px;line-height:18.8px;padding-top:1px;color:#1f2328">  <span class="k">const</span> previousPlanIdsRef = useRef&lt;<span class="f">Set</span>&lt;<span class="o">string</span>&gt;&gt;(<span class="k">new</span> <span class="f">Set</span>());</div><div class="a code" style="left:707px;top:345.20px;width:30px;text-align:right;height:18.8px;line-height:18.8px;padding-top:1px;color:#333">15</div><div class="a code" style="left:756.3px;top:345.20px;height:18.8px;line-height:18.8px;padding-top:1.4px;color:#333;font-weight:700">+</div><div class="a code" style="left:707px;top:364.00px;width:30px;text-align:right;height:18.8px;line-height:18.8px;padding-top:1px;color:#aaa">16</div><div class="a code" style="left:772.5px;top:364.00px;height:18.8px;line-height:18.8px;padding-top:1px;color:#1f2328">  <span class="k">const</span> <span class="f">toggleSidebar</span> = () =&gt; <span class="f">setSidebarOpen</span>(!sidebarOpen);</div><div class="a code" style="left:707px;top:382.80px;width:30px;text-align:right;height:18.8px;line-height:18.8px;padding-top:1px;color:#aaa">17</div><div class="a code" style="left:707px;top:401.60px;width:30px;text-align:right;height:18.8px;line-height:18.8px;padding-top:1px;color:#333">18</div><div class="a code" style="left:756.3px;top:401.60px;height:18.8px;line-height:18.8px;padding-top:1.4px;color:#333;font-weight:700">+</div><div class="a code" style="left:772.5px;top:401.60px;height:18.8px;line-height:18.8px;padding-top:1px;color:#1f2328">  <span class="m">// Load plans and detect new pending plans</span></div><div class="a code" style="left:707px;top:420.40px;width:30px;text-align:right;height:18.8px;line-height:18.8px;padding-top:1px;color:#333">19</div><div class="a code" style="left:756.3px;top:420.40px;height:18.8px;line-height:18.8px;padding-top:1.4px;color:#333;font-weight:700">+</div><div class="a code" style="left:772.5px;top:420.40px;height:18.8px;line-height:18.8px;padding-top:1px;color:#1f2328">  <span class="k">const</span> loadPlans = <span class="f">useCallback</span>(<span class="f">async</span> () =&gt; {</div><div class="a code" style="left:707px;top:439.20px;width:30px;text-align:right;height:18.8px;line-height:18.8px;padding-top:1px;color:#333">20</div><div class="a code" style="left:756.3px;top:439.20px;height:18.8px;line-height:18.8px;padding-top:1.4px;color:#333;font-weight:700">+</div><div class="a code" style="left:772.5px;top:439.20px;height:18.8px;line-height:18.8px;padding-top:1px;color:#1f2328">    <span class="k">try</span> {</div><div class="a code" style="left:707px;top:458.00px;width:30px;text-align:right;height:18.8px;line-height:18.8px;padding-top:1px;color:#333">21</div><div class="a code" style="left:756.3px;top:458.00px;height:18.8px;line-height:18.8px;padding-top:1.4px;color:#333;font-weight:700">+</div><div class="a code" style="left:772.5px;top:458.00px;height:18.8px;line-height:18.8px;padding-top:1px;color:#1f2328">      <span class="k">const</span> allPlans = <span class="k">await</span> invoke&lt;<span class="f">PlanItem</span>[]&gt;(<span class="s">&#x27;get_all_plans&#x27;</span>);</div><div class="a code" style="left:707px;top:476.80px;width:30px;text-align:right;height:18.8px;line-height:18.8px;padding-top:1px;color:#333">22</div><div class="a code" style="left:756.3px;top:476.80px;height:18.8px;line-height:18.8px;padding-top:1.4px;color:#333;font-weight:700">+</div><div class="a code" style="left:707px;top:495.60px;width:30px;text-align:right;height:18.8px;line-height:18.8px;padding-top:1px;color:#333">23</div><div class="a code" style="left:756.3px;top:495.60px;height:18.8px;line-height:18.8px;padding-top:1.4px;color:#333;font-weight:700">+</div><div class="a code" style="left:772.5px;top:495.60px;height:18.8px;line-height:18.8px;padding-top:1px;color:#1f2328">      <span class="m">// Find pending plans</span></div><div class="a code" style="left:707px;top:514.40px;width:30px;text-align:right;height:18.8px;line-height:18.8px;padding-top:1px;color:#333">24</div><div class="a code" style="left:756.3px;top:514.40px;height:18.8px;line-height:18.8px;padding-top:1.4px;color:#333;font-weight:700">+</div><div class="a code" style="left:772.5px;top:514.40px;height:18.8px;line-height:18.8px;padding-top:1px;color:#1f2328">      <span class="k">const</span> pendingPlans = allPlans.<span class="f">filter</span>(p =&gt; p.status === <span class="f">PlanStatus</span>.Pending);</div><div class="a code" style="left:707px;top:533.20px;width:30px;text-align:right;height:18.8px;line-height:18.8px;padding-top:1px;color:#333">25</div><div class="a code" style="left:756.3px;top:533.20px;height:18.8px;line-height:18.8px;padding-top:1.4px;color:#333;font-weight:700">+</div><div class="a code" style="left:707px;top:552.00px;width:30px;text-align:right;height:18.8px;line-height:18.8px;padding-top:1px;color:#333">26</div><div class="a code" style="left:756.3px;top:552.00px;height:18.8px;line-height:18.8px;padding-top:1.4px;color:#333;font-weight:700">+</div><div class="a code" style="left:772.5px;top:552.00px;height:18.8px;line-height:18.8px;padding-top:1px;color:#1f2328">      <span class="m">// Check for new pending plans that weren&#x27;t in the previous set</span></div><div class="a code" style="left:707px;top:570.80px;width:30px;text-align:right;height:18.8px;line-height:18.8px;padding-top:1px;color:#333">27</div><div class="a code" style="left:756.3px;top:570.80px;height:18.8px;line-height:18.8px;padding-top:1.4px;color:#333;font-weight:700">+</div><div class="a code" style="left:772.5px;top:570.80px;height:18.8px;line-height:18.8px;padding-top:1px;color:#1f2328">      <span class="k">for</span> (<span class="k">const</span> plan <span class="k">of</span> pendingPlans) {</div><div class="a code" style="left:707px;top:589.60px;width:30px;text-align:right;height:18.8px;line-height:18.8px;padding-top:1px;color:#333">28</div><div class="a code" style="left:756.3px;top:589.60px;height:18.8px;line-height:18.8px;padding-top:1.4px;color:#333;font-weight:700">+</div><div class="a code" style="left:772.5px;top:589.60px;height:18.8px;line-height:18.8px;padding-top:1px;color:#1f2328">        <span class="k">if</span> (!previousPlanIdsRef.current.<span class="f">has</span>(plan.id)) {</div><div class="a code" style="left:707px;top:608.40px;width:30px;text-align:right;height:18.8px;line-height:18.8px;padding-top:1px;color:#333">29</div><div class="a code" style="left:756.3px;top:608.40px;height:18.8px;line-height:18.8px;padding-top:1.4px;color:#333;font-weight:700">+</div><div class="a code" style="left:772.5px;top:608.40px;height:18.8px;line-height:18.8px;padding-top:1px;color:#1f2328">          <span class="m">// New plan detected - open the modal</span></div><div class="a code" style="left:707px;top:627.20px;width:30px;text-align:right;height:18.8px;line-height:18.8px;padding-top:1px;color:#333">30</div><div class="a code" style="left:756.3px;top:627.20px;height:18.8px;line-height:18.8px;padding-top:1.4px;color:#333;font-weight:700">+</div><div class="a code" style="left:772.5px;top:627.20px;height:18.8px;line-height:18.8px;padding-top:1px;color:#1f2328">          <span class="f">setPendingPlan</span>(plan);</div><div class="a code" style="left:707px;top:646.00px;width:30px;text-align:right;height:18.8px;line-height:18.8px;padding-top:1px;color:#333">31</div><div class="a code" style="left:756.3px;top:646.00px;height:18.8px;line-height:18.8px;padding-top:1.4px;color:#333;font-weight:700">+</div><div class="a code" style="left:772.5px;top:646.00px;height:18.8px;line-height:18.8px;padding-top:1px;color:#1f2328">          <span class="k">break</span>; <span class="m">// Only open one at a time</span></div><div class="a code" style="left:707px;top:664.80px;width:30px;text-align:right;height:18.8px;line-height:18.8px;padding-top:1px;color:#333">32</div><div class="a code" style="left:756.3px;top:664.80px;height:18.8px;line-height:18.8px;padding-top:1.4px;color:#333;font-weight:700">+</div><div class="a code" style="left:772.5px;top:664.80px;height:18.8px;line-height:18.8px;padding-top:1px;color:#1f2328">        }</div><div class="a code" style="left:707px;top:683.60px;width:30px;text-align:right;height:18.8px;line-height:18.8px;padding-top:1px;color:#333">33</div><div class="a code" style="left:756.3px;top:683.60px;height:18.8px;line-height:18.8px;padding-top:1.4px;color:#333;font-weight:700">+</div><div class="a code" style="left:772.5px;top:683.60px;height:18.8px;line-height:18.8px;padding-top:1px;color:#1f2328">      }</div><div class="a code" style="left:707px;top:702.40px;width:30px;text-align:right;height:18.8px;line-height:18.8px;padding-top:1px;color:#333">34</div><div class="a code" style="left:756.3px;top:702.40px;height:18.8px;line-height:18.8px;padding-top:1.4px;color:#333;font-weight:700">+</div><div class="a code" style="left:707px;top:721.20px;width:30px;text-align:right;height:18.8px;line-height:18.8px;padding-top:1px;color:#333">35</div><div class="a code" style="left:756.3px;top:721.20px;height:18.8px;line-height:18.8px;padding-top:1.4px;color:#333;font-weight:700">+</div><div class="a code" style="left:772.5px;top:721.20px;height:18.8px;line-height:18.8px;padding-top:1px;color:#1f2328">      <span class="m">// Update tracked plan IDs</span></div><div class="a code" style="left:707px;top:740.00px;width:30px;text-align:right;height:18.8px;line-height:18.8px;padding-top:1px;color:#333">36</div><div class="a code" style="left:756.3px;top:740.00px;height:18.8px;line-height:18.8px;padding-top:1.4px;color:#333;font-weight:700">+</div><div class="a code" style="left:772.5px;top:740.00px;height:18.8px;line-height:18.8px;padding-top:1px;color:#1f2328">      previousPlanIdsRef.current = <span class="k">new</span> <span class="f">Set</span>(pendingPlans.<span class="f">map</span>(p =&gt; p.id));</div><div class="a code" style="left:707px;top:758.80px;width:30px;text-align:right;height:18.8px;line-height:18.8px;padding-top:1px;color:#333">37</div><div class="a code" style="left:756.3px;top:758.80px;height:18.8px;line-height:18.8px;padding-top:1.4px;color:#333;font-weight:700">+</div><div class="a code" style="left:772.5px;top:758.80px;height:18.8px;line-height:18.8px;padding-top:1px;color:#1f2328">    } <span class="k">catch</span> (error) {</div><div class="a code" style="left:707px;top:777.60px;width:30px;text-align:right;height:18.8px;line-height:18.8px;padding-top:1px;color:#333">38</div><div class="a code" style="left:756.3px;top:777.60px;height:18.8px;line-height:18.8px;padding-top:1.4px;color:#333;font-weight:700">+</div><div class="a code" style="left:772.5px;top:777.60px;height:18.8px;line-height:18.8px;padding-top:1px;color:#1f2328">      <span class="k">console</span>.<span class="f">error</span>(<span class="s">&#x27;Failed to load plans:&#x27;</span>, error);</div><div class="a code" style="left:707px;top:796.40px;width:30px;text-align:right;height:18.8px;line-height:18.8px;padding-top:1px;color:#333">39</div><div class="a code" style="left:756.3px;top:796.40px;height:18.8px;line-height:18.8px;padding-top:1.4px;color:#333;font-weight:700">+</div><div class="a code" style="left:772.5px;top:796.40px;height:18.8px;line-height:18.8px;padding-top:1px;color:#1f2328">    }</div><div class="a code" style="left:707px;top:815.20px;width:30px;text-align:right;height:18.8px;line-height:18.8px;padding-top:1px;color:#333">40</div><div class="a code" style="left:756.3px;top:815.20px;height:18.8px;line-height:18.8px;padding-top:1.4px;color:#333;font-weight:700">+</div><div class="a code" style="left:772.5px;top:815.20px;height:18.8px;line-height:18.8px;padding-top:1px;color:#1f2328">  }, []);</div><div class="a code" style="left:707px;top:834.00px;width:30px;text-align:right;height:18.8px;line-height:18.8px;padding-top:1px;color:#333">41</div><div class="a code" style="left:756.3px;top:834.00px;height:18.8px;line-height:18.8px;padding-top:1.4px;color:#333;font-weight:700">+</div><div class="a code" style="left:707px;top:852.80px;width:30px;text-align:right;height:18.8px;line-height:18.8px;padding-top:1px;color:#333">42</div><div class="a code" style="left:756.3px;top:852.80px;height:18.8px;line-height:18.8px;padding-top:1.4px;color:#333;font-weight:700">+</div><div class="a code" style="left:772.5px;top:852.80px;height:18.8px;line-height:18.8px;padding-top:1px;color:#1f2328">  <span class="m">// Poll for pending plans</span></div><div class="a code" style="left:707px;top:871.60px;width:30px;text-align:right;height:18.8px;line-height:18.8px;padding-top:1px;color:#333">43</div><div class="a code" style="left:756.3px;top:871.60px;height:18.8px;line-height:18.8px;padding-top:1.4px;color:#333;font-weight:700">+</div><div class="a code" style="left:772.5px;top:871.60px;height:18.8px;line-height:18.8px;padding-top:1px;color:#1f2328">  <span class="f">useEffect</span>(() =&gt; {</div><div class="a code" style="left:707px;top:890.40px;width:30px;text-align:right;height:18.8px;line-height:18.8px;padding-top:1px;color:#333">44</div><div class="a code" style="left:756.3px;top:890.40px;height:18.8px;line-height:18.8px;padding-top:1.4px;color:#333;font-weight:700">+</div><div class="a code" style="left:772.5px;top:890.40px;height:18.8px;line-height:18.8px;padding-top:1px;color:#1f2328">    <span class="f">loadPlans</span>();</div><div class="a code" style="left:707px;top:909.20px;width:30px;text-align:right;height:18.8px;line-height:18.8px;padding-top:1px;color:#333">45</div><div class="a code" style="left:756.3px;top:909.20px;height:18.8px;line-height:18.8px;padding-top:1.4px;color:#333;font-weight:700">+</div><div class="a code" style="left:772.5px;top:909.20px;height:18.8px;line-height:18.8px;padding-top:1px;color:#1f2328">    <span class="k">const</span> interval = <span class="o">setInterval</span>(loadPlans, <span class="c">2000</span>); <span class="m">// Poll every 2 seconds</span></div><div class="a code" style="left:707px;top:928.00px;width:30px;text-align:right;height:18.8px;line-height:18.8px;padding-top:1px;color:#333">46</div><div class="a code" style="left:756.3px;top:928.00px;height:18.8px;line-height:18.8px;padding-top:1.4px;color:#333;font-weight:700">+</div><div class="a code" style="left:772.5px;top:928.00px;height:18.8px;line-height:18.8px;padding-top:1px;color:#1f2328">    <span class="k">return</span> () =&gt; <span class="o">clearInterval</span>(interval);</div><div class="a code" style="left:707px;top:946.80px;width:30px;text-align:right;height:18.8px;line-height:18.8px;padding-top:1px;color:#333">47</div><div class="a code" style="left:756.3px;top:946.80px;height:18.8px;line-height:18.8px;padding-top:1.4px;color:#333;font-weight:700">+</div><div class="a code" style="left:772.5px;top:946.80px;height:18.8px;line-height:18.8px;padding-top:1px;color:#1f2328">  }, [loadPlans]);</div><div class="a code" style="left:707px;top:965.60px;width:30px;text-align:right;height:18.8px;line-height:18.8px;padding-top:1px;color:#333">48</div><div class="a code" style="left:756.3px;top:965.60px;height:18.8px;line-height:18.8px;padding-top:1.4px;color:#333;font-weight:700">+</div><div class="a code" style="left:707px;top:984.40px;width:30px;text-align:right;height:18.8px;line-height:18.8px;padding-top:1px;color:#333">49</div><div class="a code" style="left:756.3px;top:984.40px;height:18.8px;line-height:18.8px;padding-top:1.4px;color:#333;font-weight:700">+</div><div class="a code" style="left:772.5px;top:984.40px;height:18.8px;line-height:18.8px;padding-top:1px;color:#1f2328">  <span class="m">// Handle plan review completion</span></div><div class="a code" style="left:707px;top:1003.20px;width:30px;text-align:right;height:18.8px;line-height:18.8px;padding-top:1px;color:#333">50</div><div class="a code" style="left:756.3px;top:1003.20px;height:18.8px;line-height:18.8px;padding-top:1.4px;color:#333;font-weight:700">+</div><div class="a code" style="left:772.5px;top:1003.20px;height:18.8px;line-height:18.8px;padding-top:1px;color:#1f2328">  <span class="k">const</span> handlePlanComplete = <span class="f">useCallback</span>(() =&gt; {</div><div class="a code" style="left:707px;top:1022.00px;width:30px;text-align:right;height:18.8px;line-height:18.8px;padding-top:1px;color:#333">51</div><div class="a code" style="left:756.3px;top:1022.00px;height:18.8px;line-height:18.8px;padding-top:1.4px;color:#333;font-weight:700">+</div><div class="a code" style="left:772.5px;top:1022.00px;height:18.8px;line-height:18.8px;padding-top:1px;color:#1f2328">    <span class="f">setPendingPlan</span>(<span class="c">null</span>);</div><div class="a code" style="left:707px;top:1040.80px;width:30px;text-align:right;height:18.8px;line-height:18.8px;padding-top:1px;color:#333">52</div><div class="a code" style="left:756.3px;top:1040.80px;height:18.8px;line-height:18.8px;padding-top:1.4px;color:#333;font-weight:700">+</div><div class="a code" style="left:772.5px;top:1040.80px;height:18.8px;line-height:18.8px;padding-top:1px;color:#1f2328">    <span class="f">loadPlans</span>(); <span class="m">// Refresh to update tracked IDs</span></div><div class="a code" style="left:707px;top:1059.60px;width:30px;text-align:right;height:18.8px;line-height:18.8px;padding-top:1px;color:#333">53</div><div class="a code" style="left:756.3px;top:1059.60px;height:18.8px;line-height:18.8px;padding-top:1.4px;color:#333;font-weight:700">+</div><div class="a code" style="left:772.5px;top:1059.60px;height:18.8px;line-height:18.8px;padding-top:1px;color:#1f2328">  }, [loadPlans]);</div><div class="a code" style="left:707px;top:1078.40px;width:30px;text-align:right;height:18.8px;line-height:18.8px;padding-top:1px;color:#333">54</div><div class="a code" style="left:756.3px;top:1078.40px;height:18.8px;line-height:18.8px;padding-top:1.4px;color:#333;font-weight:700">+</div><div class="a code" style="left:707px;top:1097.20px;width:30px;text-align:right;height:18.8px;line-height:18.8px;padding-top:1px;color:#333">55</div><div class="a code" style="left:756.3px;top:1097.20px;height:18.8px;line-height:18.8px;padding-top:1.4px;color:#333;font-weight:700">+</div><div class="a code" style="left:772.5px;top:1097.20px;height:18.8px;line-height:18.8px;padding-top:1px;color:#1f2328">  <span class="m">// Handle plan modal close</span></div><div class="a code" style="left:707px;top:1116.00px;width:30px;text-align:right;height:18.8px;line-height:18.8px;padding-top:1px;color:#333">56</div><div class="a code" style="left:756.3px;top:1116.00px;height:18.8px;line-height:18.8px;padding-top:1.4px;color:#333;font-weight:700">+</div><div class="a code" style="left:772.5px;top:1116.00px;height:18.8px;line-height:18.8px;padding-top:1px;color:#1f2328">  <span class="k">const</span> handlePlanClose = <span class="f">useCallback</span>(() =&gt; {</div><div class="a code" style="left:707px;top:1134.80px;width:30px;text-align:right;height:18.8px;line-height:18.8px;padding-top:1px;color:#333">57</div><div class="a code" style="left:756.3px;top:1134.80px;height:18.8px;line-height:18.8px;padding-top:1.4px;color:#333;font-weight:700">+</div><div class="a code" style="left:772.5px;top:1134.80px;height:18.8px;line-height:18.8px;padding-top:1px;color:#1f2328">    <span class="f">setPendingPlan</span>(<span class="c">null</span>);</div><div class="a code" style="left:707px;top:1153.60px;width:30px;text-align:right;height:18.8px;line-height:18.8px;padding-top:1px;color:#333">58</div><div class="a code" style="left:756.3px;top:1153.60px;height:18.8px;line-height:18.8px;padding-top:1.4px;color:#333;font-weight:700">+</div><div class="a code" style="left:772.5px;top:1153.60px;height:18.8px;line-height:18.8px;padding-top:1px;color:#1f2328">  }, []);</div><div class="a code" style="left:707px;top:1172.40px;width:30px;text-align:right;height:18.8px;line-height:18.8px;padding-top:1px;color:#333">59</div><div class="a code" style="left:756.3px;top:1172.40px;height:18.8px;line-height:18.8px;padding-top:1.4px;color:#333;font-weight:700">+</div><div class="a code" style="left:707px;top:1191.20px;width:30px;text-align:right;height:18.8px;line-height:18.8px;padding-top:1px;color:#aaa">60</div><div class="a code" style="left:772.5px;top:1191.20px;height:18.8px;line-height:18.8px;padding-top:1px;color:#1f2328">  <span class="k">return</span> (</div><div class="a code" style="left:707px;top:1210.00px;width:30px;text-align:right;height:18.8px;line-height:18.8px;padding-top:1px;color:#aaa">61</div><div class="a code" style="left:772.5px;top:1210.00px;height:18.8px;line-height:18.8px;padding-top:1px;color:#1f2328">    &lt;<span class="g">div</span> <span class="c">className</span>=<span class="s">&quot;flex flex-col h-screen bg-background w-full&quot;</span>&gt;</div><div class="a code" style="left:707px;top:1228.80px;width:30px;text-align:right;height:18.8px;line-height:18.8px;padding-top:1px;color:#aaa">62</div><div class="a code" style="left:772.5px;top:1228.80px;height:18.8px;line-height:18.8px;padding-top:1px;color:#1f2328">      &lt;<span class="g">AgentHeader</span> <span class="c">sidebarOpen</span>={sidebarOpen} <span class="c">onToggleSidebar</span>={toggleSidebar} /&gt;</div><div class="a code" style="left:707px;top:1247.60px;width:30px;text-align:right;height:18.8px;line-height:18.8px;padding-top:1px;color:#aaa">63</div><div class="a code" style="left:772.5px;top:1247.60px;height:18.8px;line-height:18.8px;padding-top:1px;color:#1f2328">      &lt;<span class="g">div</span> <span class="c">className</span>=<span class="s">&quot;flex flex-1 overflow-hidden&quot;</span>&gt;</div><div class="a code" style="left:707px;top:1266.40px;width:30px;text-align:right;height:18.8px;line-height:18.8px;padding-top:1px;color:#aaa">64</div><div class="a code" style="left:772.5px;top:1266.40px;height:18.8px;line-height:18.8px;padding-top:1px;color:#1f2328">        &lt;<span class="g">ChatInterface</span> /&gt;</div><div class="a code" style="left:707px;top:1285.20px;width:30px;text-align:right;height:18.8px;line-height:18.8px;padding-top:1px;color:#aaa">65</div><div class="a code" style="left:772.5px;top:1285.20px;height:18.8px;line-height:18.8px;padding-top:1px;color:#1f2328">        {sidebarOpen &amp;&amp; &lt;<span class="g">RightSidebar</span> /&gt;}</div><div class="a code" style="left:707px;top:1304.00px;width:30px;text-align:right;height:18.8px;line-height:18.8px;padding-top:1px;color:#aaa">66</div><div class="a code" style="left:772.5px;top:1304.00px;height:18.8px;line-height:18.8px;padding-top:1px;color:#1f2328">      &lt;/<span class="g">div</span>&gt;</div><div class="a code" style="left:707px;top:1322.80px;width:30px;text-align:right;height:18.8px;line-height:18.8px;padding-top:1px;color:#333">67</div><div class="a code" style="left:756.3px;top:1322.80px;height:18.8px;line-height:18.8px;padding-top:1.4px;color:#333;font-weight:700">+</div><div class="a code" style="left:707px;top:1341.60px;width:30px;text-align:right;height:18.8px;line-height:18.8px;padding-top:1px;color:#333">68</div><div class="a code" style="left:756.3px;top:1341.60px;height:18.8px;line-height:18.8px;padding-top:1.4px;color:#333;font-weight:700">+</div><div class="a code" style="left:772.5px;top:1341.60px;height:18.8px;line-height:18.8px;padding-top:1px;color:#1f2328">      {<span class="m">/* Plan Review Modal */</span>}</div></div><div class="a" style="left:3130px;top:32px;width:1px;height:1316px;background:#d8d8d8"></div><div class="t" style="left:3139.6px;top:42.03px;font-size:14.5px;font-family:'Liberation Sans',sans-serif;color:#222;font-weight:700;">Changes</div><svg class="a" style="left:3411px;top:43px;" width="8" height="11" viewBox="0 0 8 11" fill="none" stroke="none" stroke-width="2" stroke-linecap="round" stroke-linejoin="round"><path d="M1 0.5v10l6.5-5z" fill="#444"/></svg><div class="a" style="left:3131px;top:64px;width:299px;height:1px;background:#d8d8d8"></div><div class="t" style="left:3139.6px;top:74.26px;font-size:14.7px;font-family:'Liberation Sans',sans-serif;color:#222;font-weight:700;">Git</div><svg class="a" style="left:3408px;top:78px;" width="13" height="8" viewBox="0 0 13 8" fill="none" stroke="none" stroke-width="2" stroke-linecap="round" stroke-linejoin="round"><path d="M0.5 1h12l-6 6z" fill="#444"/></svg><div class="a" style="left:3131px;top:97px;width:299px;height:1px;background:#d8d8d8"></div><div class="a" style="left:3139px;top:106px;width:283px;height:117px;background:#fff;border-radius:5px"></div><div class="t" style="left:3147.6px;top:119.43px;font-size:15.2px;font-family:'Liberation Sans',sans-serif;color:#484848;font-weight:700;">medusa</div><div class="a" style="left:3147px;top:148px;width:93px;height:29px;background:#e0e0e0;border-radius:4px"></div><svg class="a" style="left:3156px;top:156px;" width="14" height="13" viewBox="0 0 14 13" fill="none" stroke="#333" stroke-width="1.3" stroke-linecap="round" stroke-linejoin="round"><circle cx="2.5" cy="10.5" r="1.6"/><circle cx="2.5" cy="2.5" r="1.6"/><circle cx="11" cy="2.5" r="1.6"/><path d="M2.5 4.1v4.8"/><path d="M11 4.1a4 4 0 0 1-4 4H4"/></svg><div class="t" style="left:3174.6px;top:154.50px;font-size:14.3px;font-family:'Liberation Sans',sans-serif;color:#333;font-weight:400;">master</div><svg class="a" style="left:3223px;top:159px;" width="9" height="6" viewBox="0 0 9 6" fill="none" stroke="#444" stroke-width="1.2" stroke-linecap="round" stroke-linejoin="round"><path d="M1 1l3.5 3.5L8 1"/></svg><svg class="a" style="left:3352px;top:156px;" width="11" height="13" viewBox="0 0 11 13" fill="none" stroke="#3aa63a" stroke-width="1.4" stroke-linecap="round" stroke-linejoin="round"><path d="M5.5 12.5V1.2"/><path d="M1 5.5l4.5-4.5L10 5.5"/></svg><div class="t" style="left:3366px;top:154.15px;font-size:14px;font-family:'Liberation Sans',sans-serif;color:#3aa63a;font-weight:700;">1</div><div class="a" style="left:3390.8px;top:160.8px;width:2.4px;height:2.4px;border-radius:50%;background:#333"></div><div class="a" style="left:3396.8px;top:160.8px;width:2.4px;height:2.4px;border-radius:50%;background:#333"></div><div class="a" style="left:3402.8px;top:160.8px;width:2.4px;height:2.4px;border-radius:50%;background:#333"></div><div class="a" style="left:3147px;top:186px;width:128px;height:29px;background:#e0e0e0;border-radius:4px 0 0 4px"></div><div class="a" style="left:3277px;top:186px;width:31px;height:29px;background:#e0e0e0;border-radius:0 4px 4px 0"></div><div class="t" style="left:3155.5px;top:192.76px;font-size:14.1px;font-family:'Liberation Sans',sans-serif;color:#333;font-weight:400;">Open pull request</div><svg class="a" style="left:3286px;top:197px;" width="13" height="8" viewBox="0 0 13 8" fill="none" stroke="#555" stroke-width="1.2" stroke-linecap="round" stroke-linejoin="round"><path d="M1 1l5.5 5.5L12 1"/></svg><div class="a" style="left:3139px;top:231px;width:283px;height:82px;background:#fff;border-radius:5px"></div><svg class="a" style="left:3149px;top:244px;" width="14" height="14" viewBox="0 0 14 14" fill="none" stroke="#555" stroke-width="1.1" stroke-linecap="round" stroke-linejoin="round"><circle cx="2.3" cy="2.3" r="1.5"/><circle cx="2.3" cy="11.3" r="1.5"/><path d="M2.3 3.8v6"/><path d="M11.5 2.8v2.7a2 2 0 0 1-2 2H2.3"/><path d="M9.8 3.2l1.7-1.9 1.7 1.9z" fill="#555"/></svg><div class="t" style="left:3171.4px;top:244.30px;font-size:15px;font-family:'Liberation Sans',sans-serif;color:#484848;font-weight:700;">Working Branch</div><div class="a" style="left:3147px;top:271px;width:267px;height:34px;background:#f0f0f0;border:1px solid #d8d8d8;border-radius:4px"></div><div class="t" style="left:3156px;top:279.69px;font-size:16.9px;font-family:'Liberation Sans',sans-serif;color:#333;font-weight:400;">vk/3ccf-explore-the-code</div><svg class="a" style="left:3389px;top:280px;" width="16" height="16" viewBox="0 0 16 16" fill="none" stroke="#666" stroke-width="1.1" stroke-linecap="round" stroke-linejoin="round"><path d="M10.5 1.5l3.5 3.5-7.5 7.5H2.5v-4z"/><path d="M8.3 3.7l3.5 3.5"/><path d="M2.5 14.5h11"/></svg><div class="a" style="left:3131px;top:321px;width:299px;height:1px;background:#d8d8d8"></div><div class="t" style="left:3139.5px;top:330.58px;font-size:15.5px;font-family:'Liberation Sans',sans-serif;color:#222;font-weight:700;">Terminal</div><svg class="a" style="left:3389px;top:332px;" width="13" height="13" viewBox="0 0 13 13" fill="none" stroke="#444" stroke-width="1.2" stroke-linecap="round" stroke-linejoin="round"><path d="M7.5 1.5h4v4"/><path d="M11.5 1.5L7.5 5.5"/><path d="M5.5 11.5h-4v-4"/><path d="M1.5 11.5l4-4"/></svg><svg class="a" style="left:3411px;top:334px;" width="8" height="11" viewBox="0 0 8 11" fill="none" stroke="none" stroke-width="2" stroke-linecap="round" stroke-linejoin="round"><path d="M1 0.5v10l6.5-5z" fill="#444"/></svg><div class="a" style="left:3131px;top:354px;width:299px;height:1px;background:#d8d8d8"></div><div class="t" style="left:3139.5px;top:364.22px;font-size:15.1px;font-family:'Liberation Sans',sans-serif;color:#222;font-weight:700;">Notes</div><svg class="a" style="left:3408px;top:368px;" width="13" height="8" viewBox="0 0 13 8" fill="none" stroke="none" stroke-width="2" stroke-linecap="round" stroke-linejoin="round"><path d="M0.5 1h12l-6 6z" fill="#444"/></svg><div class="a" style="left:3131px;top:387px;width:299px;height:1px;background:#d8d8d8"></div><div class="t" style="left:3139.5px;top:400.17px;font-size:16.1px;font-family:'Liberation Sans',sans-serif;color:#6a6a6a;font-weight:400;">Add notes about this workspace...</div><div class="a" style="left:3131px;top:704px;width:299px;height:1px;background:#d4d4d4"></div><div class="a" style="left:0;top:1335px;width:13px;height:13px;overflow:hidden"><div class="a" style="left:0;top:-13px;width:26px;height:26px;border-radius:50%;box-shadow:0 0 0 1px #f6f6f6,0 0 0 20px #161616"></div></div><div class="a" style="left:3417px;top:1335px;width:13px;height:13px;overflow:hidden"><div class="a" style="left:-13px;top:-13px;width:26px;height:26px;border-radius:50%;box-shadow:0 0 0 1px #f6f6f6,0 0 0 20px #161616"></div></div></div></body></html>
